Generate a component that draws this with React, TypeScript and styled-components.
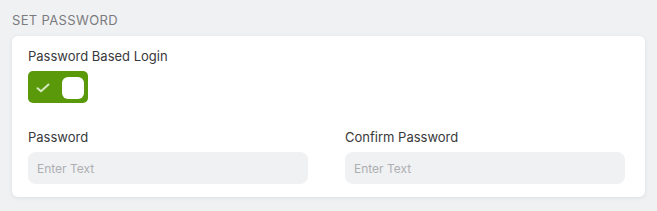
import React from 'react';
import styled, { createGlobalStyle } from 'styled-components';

const GlobalStyle = createGlobalStyle`
  html, body {
    margin: 0;
    padding: 0;
    background: #f0f1f3;
    font-family: Inter, "Liberation Sans", sans-serif;
  }
`;

export default function App() {
    return (
        <>
            <GlobalStyle />
            <Page>
                <SectionTitle>Set Password</SectionTitle>
                <Card>
                    <FieldLabel>Password Based Login</FieldLabel>
                    <Toggle type="button" aria-pressed="true">
                        <CheckIcon viewBox="0 0 14 10">
                            <path d="M1.5 5.2 L5 8.3 L12.5 1.5" />
                        </CheckIcon>
                        <Knob />
                    </Toggle>

                    <FieldGrid>
                        <Field>
                            <FieldLabel>Password</FieldLabel>
                            <TextInput type="password" placeholder="Enter Text" />
                        </Field>
                        <Field>
                            <FieldLabel>Confirm Password</FieldLabel>
                            <TextInput type="password" placeholder="Enter Text" />
                        </Field>
                    </FieldGrid>
                </Card>
            </Page>
        </>
    );
}

const Page = styled.div`
    padding: 12px 12px 15px 12px;
`;

const SectionTitle = styled.div`
    font-size: 13px;
    line-height: 16px;
    letter-spacing: 0.35px;
    text-transform: uppercase;
    color: #7a7b7e;
    margin-bottom: 8px;
`;

const Card = styled.div`
    width: 633px;
    box-sizing: border-box;
    background: #ffffff;
    border-radius: 6px;
    box-shadow: 0 1px 4px rgba(0, 0, 0, 0.08);
    padding: 11px 16px 13px 16px;
`;

const FieldLabel = styled.div`
    font-size: 13px;
    line-height: 18px;
    color: #38393b;
    margin-bottom: 6px;
`;

const Toggle = styled.button`
    width: 60px;
    height: 32px;
    box-sizing: border-box;
    border: none;
    border-radius: 5px;
    background: #5a9a0a;
    display: flex;
    align-items: center;
    justify-content: space-between;
    padding: 0 4px 0 8px;
    cursor: pointer;
`;

const CheckIcon = styled.svg`
    width: 14px;
    height: 10px;
    margin-top: 2px;
    fill: none;
    stroke: #d6e8c2;
    stroke-width: 2;
    stroke-linecap: round;
    stroke-linejoin: round;
`;

const Knob = styled.span`
    width: 22px;
    height: 22px;
    border-radius: 6px;
    background: #ffffff;
    margin-top: 1px;
`;

const FieldGrid = styled.div`
    display: grid;
    grid-template-columns: 280px 280px;
    column-gap: 37px;
    margin-top: 25px;
`;

const Field = styled.div`
    display: flex;
    flex-direction: column;
`;

const TextInput = styled.input`
    height: 32px;
    box-sizing: border-box;
    border: none;
    border-radius: 8px;
    background: #f0f1f3;
    padding: 0 9px;
    font-family: Inter, "Liberation Sans", sans-serif;
    font-size: 12px;
    color: #333;
    outline: none;
    &::placeholder {
        color: #aeafb2;
    }
`;
